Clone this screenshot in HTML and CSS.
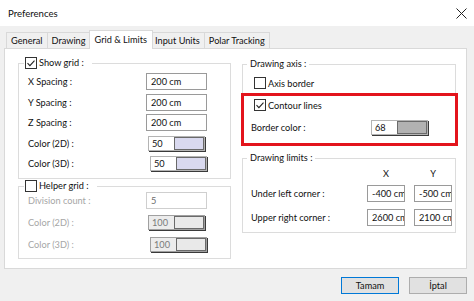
FILE: index.html
```html
<!DOCTYPE html>
<html lang="en">
<head>
    <meta charset="UTF-8">
    <title>Preferences</title>
    <link rel="stylesheet" href="styles.css">
</head>
<body>
    <div class="window">
        <div class="titlebar">
            <span>Preferences</span>
            <svg class="close" width="11" height="11" viewBox="0 0 11 11"><path d="M0.5 0.5L10.5 10.5M10.5 0.5L0.5 10.5" stroke="#222" stroke-width="1"/></svg>
        </div>
        <div class="client">
            <div class="tabs">
                <div class="tab">General</div>
                <div class="tab">Drawing</div>
                <div class="tab active">Grid &amp; Limits</div>
                <div class="tab">Input Units</div>
                <div class="tab">Polar Tracking</div>
            </div>
            <div class="panel">
                <div class="col">
                    <fieldset class="group grid-group">
                        <legend class="check-legend">
                            <svg class="box" width="12" height="12" viewBox="0 0 12 12"><rect x="0.5" y="0.5" width="11" height="11" fill="#fff" stroke="#333"/><path d="M2.5 6.2l2.4 2.4 4.6-5" fill="none" stroke="#222" stroke-width="1.1"/></svg>
                            <span>Show grid :</span>
                        </legend>
                        <div class="rows">
                            <div class="row"><span>X Spacing :</span><div class="field">200 cm</div></div>
                            <div class="row"><span>Y Spacing :</span><div class="field">200 cm</div></div>
                            <div class="row"><span>Z Spacing :</span><div class="field">200 cm</div></div>
                            <div class="row"><span>Color (2D) :</span><div class="picker"><span>50</span><i class="swatch lilac"></i></div></div>
                            <div class="row"><span>Color (3D) :</span><div class="picker shift"><span>50</span><i class="swatch lilac"></i></div></div>
                        </div>
                    </fieldset>
                    <fieldset class="group helper-group disabled">
                        <legend class="check-legend">
                            <svg class="box" width="12" height="12" viewBox="0 0 12 12"><rect x="0.5" y="0.5" width="11" height="11" fill="#fff" stroke="#333"/></svg>
                            <span>Helper grid :</span>
                        </legend>
                        <div class="rows">
                            <div class="row"><span>Division count :</span><div class="field">5</div></div>
                            <div class="row"><span>Color (2D) :</span><div class="picker"><span>100</span><i class="swatch"></i></div></div>
                            <div class="row"><span>Color (3D) :</span><div class="picker shift"><span>100</span><i class="swatch"></i></div></div>
                        </div>
                    </fieldset>
                </div>
                <div class="col right">
                    <fieldset class="group axis-group">
                        <legend>Drawing axis :</legend>
                        <div class="check-row first">
                            <svg class="box" width="12" height="12" viewBox="0 0 12 12"><rect x="0.5" y="0.5" width="11" height="11" fill="#fff" stroke="#333"/></svg>
                            <span>Axis border</span>
                        </div>
                        <div class="highlight">
                            <div class="check-row">
                                <svg class="box" width="12" height="12" viewBox="0 0 12 12"><rect x="0.5" y="0.5" width="11" height="11" fill="#fff" stroke="#333"/><path d="M2.5 6.2l2.4 2.4 4.6-5" fill="none" stroke="#222" stroke-width="1.1"/></svg>
                                <span>Contour lines</span>
                            </div>
                            <div class="border-row">
                                <span>Border color :</span>
                                <div class="picker"><span>68</span><i class="swatch gray"></i></div>
                            </div>
                        </div>
                    </fieldset>
                    <fieldset class="group limits-group">
                        <legend>Drawing limits :</legend>
                        <div class="limits">
                            <span></span><span class="axis">X</span><span class="axis">Y</span>
                            <span>Under left corner :</span><div class="field small">-400 cm</div><div class="field small">-500 cm</div>
                            <span>Upper right corner :</span><div class="field small">2600 cm</div><div class="field small">2100 cm</div>
                        </div>
                    </fieldset>
                </div>
            </div>
            <div class="footer">
                <button class="btn default">Tamam</button>
                <button class="btn">İptal</button>
            </div>
        </div>
    </div>
</body>
</html>
```

FILE: styles.css
```css
* {
    margin: 0;
    padding: 0;
    box-sizing: border-box;
}

body {
    width: 474px;
    height: 301px;
    overflow: hidden;
    font-family: Lato, "Noto Sans", sans-serif;
    font-size: 9.2px;
    color: #111;
    background: #f0f0f0;
}

.window {
    width: 474px;
    height: 301px;
    display: flex;
    flex-direction: column;
}

/* Title bar */
.titlebar {
    height: 26px;
    background: #fff;
    display: flex;
    align-items: center;
    justify-content: space-between;
    padding: 0 7px 0 8px;
    font-size: 9.6px;
}

.client {
    flex: 1;
    padding: 4px 7px 0 4px;
    display: flex;
    flex-direction: column;
}

/* Tabs */
.tabs {
    display: flex;
    align-items: flex-end;
    height: 18px;
    padding-left: 3px;
    position: relative;
    z-index: 1;
}

.tab {
    height: 16px;
    line-height: 15px;
    padding: 0 4px;
    border: 1px solid #d9d9d9;
    border-bottom: none;
    margin-left: -1px;
    background: #f0f0f0;
}

.tab.active {
    height: 19px;
    line-height: 17px;
    background: #fff;
    margin: 0 -2px -1px -2px;
    padding: 0 5px;
    position: relative;
    z-index: 2;
}

/* Panel */
.panel {
    height: 221px;
    background: #fff;
    border: 1px solid #d9d9d9;
    display: flex;
    gap: 11px;
    padding: 8px 10px 0 13px;
}

.col {
    width: 213px;
    display: flex;
    flex-direction: column;
}

.col.right {
    width: 214px;
    padding-top: 1px;
}

.group {
    border: 1px solid #dcdcdc;
    min-width: 0;
}

.group legend {
    margin-left: 4px;
    padding: 0 3px;
    line-height: 12px;
    height: 12px;
}

.check-legend {
    display: flex;
    align-items: center;
    gap: 2px;
    margin-left: 5px !important;
    padding: 0 8px 0 1px !important;
}

.box {
    display: block;
    flex-shrink: 0;
}

.rows {
    display: flex;
    flex-direction: column;
    padding: 4px 0 6px 9px;
}

.row {
    display: flex;
    align-items: center;
    height: 17px;
}

.row > span:first-child {
    width: 118px;
}

.grid-group .rows {
    gap: 3.5px;
}

.helper-group {
    margin-top: 1px;
}

.helper-group .rows {
    padding-top: 0;
    padding-bottom: 5px;
    gap: 5px;
}

/* Inputs */
.field {
    width: 61px;
    height: 17px;
    line-height: 15px;
    border: 1px solid #9a9a9a;
    background: #fff;
    padding-left: 4px;
    white-space: nowrap;
    overflow: hidden;
}

.field.small {
    width: 38px;
    padding-left: 4px;
}

.picker {
    display: flex;
    width: 57px;
    height: 15px;
    margin-left: 2px;
    border: 1px solid #b4b4b4;
    background: #fff;
    box-shadow: 1px 1px 0 #3a3a3a;
}

.picker.shift {
    margin-left: 4px;
}

.picker span {
    flex: 1;
    line-height: 13px;
    padding-left: 3px;
}

.swatch {
    width: 30px;
    border: 1px solid #6a6a6a;
    background: #e9e9e9;
}

.swatch.lilac {
    background: #d9d9ef;
}

.swatch.gray {
    background: #b2b2b2;
}

.disabled .rows {
    color: #a6a6a6;
}

.disabled .field {
    border-color: #cfcfcf;
    color: #6d6d6d;
}

.disabled .picker {
    background: #ececec;
    border-color: #a0a0a0;
}

.disabled .picker span {
    color: #7a7a7a;
}

/* Right column */
.check-row {
    display: flex;
    align-items: center;
    gap: 2px;
    height: 14px;
}

.check-row.first {
    margin: 6px 0 0 11px;
}

.highlight {
    margin: 3px -3px -2px -2px;
    border: 3px solid #e3141c;
    padding: 2px 0 7px 0;
    position: relative;
}

.highlight .check-row {
    padding-left: 10px;
}

.border-row {
    display: flex;
    align-items: center;
    height: 18px;
    margin-top: 6px;
    padding-left: 7px;
}

.border-row > span {
    width: 118px;
}

.limits-group {
    margin-top: 7px;
}

.limits {
    display: grid;
    grid-template-columns: 107px 38px 38px;
    grid-template-rows: 10px 17px 17px;
    column-gap: 9px;
    row-gap: 7px;
    align-items: center;
    padding: 4px 0 6px 8px;
}

.limits .axis {
    text-align: center;
}

/* Footer */
.footer {
    display: flex;
    justify-content: flex-end;
    gap: 10px;
    margin-top: 8px;
}

.btn {
    width: 58px;
    height: 17px;
    font: inherit;
    color: #111;
    background: #e1e1e1;
    border: 1px solid #adadad;
}

.btn.default {
    border-color: #0078d7;
}
```
